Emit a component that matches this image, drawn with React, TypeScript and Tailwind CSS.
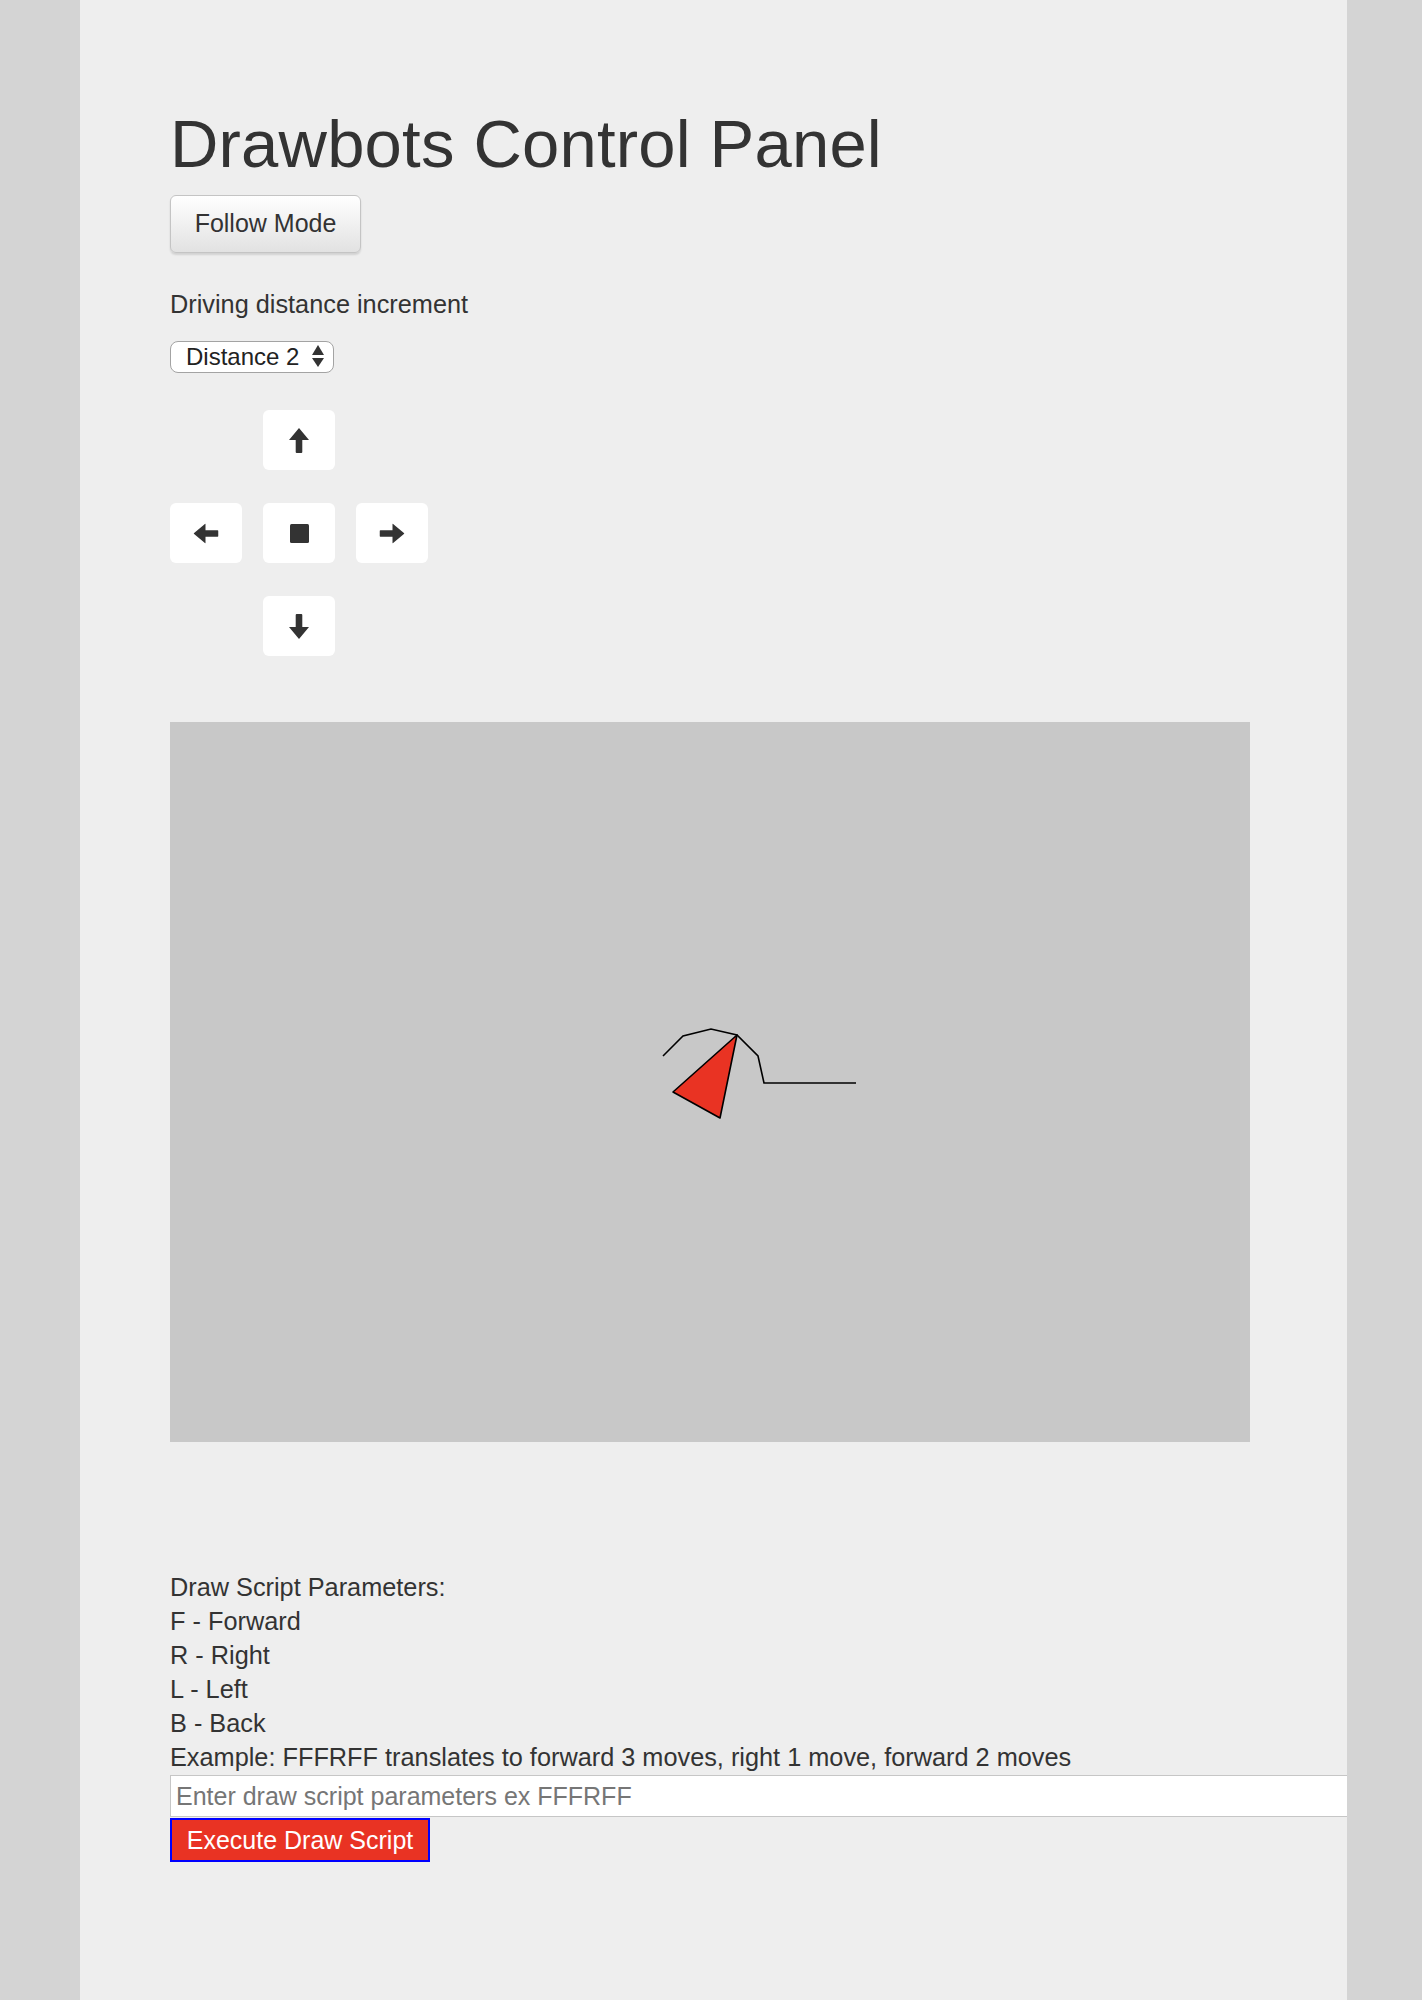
import { useState } from "react"

const ArrowUp = ({ className = "" }: { className?: string }) => (
  <svg width="20" height="25" viewBox="0 0 20 25" className={className}>
    <path d="M10 0 L20 12 H13.3 V24 Q13.3 25 12.3 25 H7.7 Q6.7 25 6.7 24 V12 H0 Z" fill="#333" />
  </svg>
)

const StopSquare = () => (
  <svg width="19" height="19" viewBox="0 0 19 19">
    <rect x="0" y="0" width="19" height="19" rx="1.5" fill="#333" />
  </svg>
)

function PadButton({ children }: { children: React.ReactNode }) {
  return (
    <button className="flex h-[60px] w-[72px] items-center justify-center rounded-[6px] bg-white">
      {children}
    </button>
  )
}

// canvas drawing points, relative to the 1080x720 board
const trail = "493,334 513,314 541,307 567,313 588,334 594,361 686,361"
const bot = "567,313 503,370 550,396"

export default function App() {
  const [distance, setDistance] = useState("2")
  const [script, setScript] = useState("")

  return (
    <div className="min-h-[2000px] bg-[#d4d4d4] font-['Liberation_Sans',Arial,Helvetica,sans-serif] text-[#333]">
      <div className="ml-[80px] min-h-[2000px] w-[1267px] overflow-hidden bg-[#eeeeee] pl-[90px] pt-[107px]">
        <h1 className="text-[67px] leading-[74px] font-normal tracking-[0.2px]">Drawbots Control Panel</h1>

        <button className="mt-[14px] h-[58px] w-[191px] rounded-[6px] border border-[#c4c4c4] bg-gradient-to-b from-white to-[#e2e2e2] text-[25px] shadow-[0_2px_2px_rgba(0,0,0,0.12)]">
          Follow Mode
        </button>

        <p className="mt-[34px] text-[25.3px] leading-[34px]">Driving distance increment</p>

        <div className="relative mt-[20px] w-[164px]">
          <select
            value={distance}
            onChange={(e) => setDistance(e.target.value)}
            className="h-[32px] w-[164px] appearance-none rounded-[8px] border border-[#a3a3a3] bg-white pl-[15px] text-[24px] leading-[30px] text-[#222]"
          >
            <option value="1">Distance 1</option>
            <option value="2">Distance 2</option>
            <option value="3">Distance 3</option>
          </select>
          <svg
            width="12"
            height="22"
            viewBox="0 0 12 22"
            className="pointer-events-none absolute left-[142px] top-[4px]"
          >
            <path d="M6 0 L12 10 H0 Z" fill="#333" />
            <path d="M0 13 H12 L6 22 Z" fill="#333" />
          </svg>
        </div>

        <div className="mt-[37px] grid w-max grid-cols-[72px_72px_72px] gap-x-[21px] gap-y-[33px]">
          <div />
          <PadButton>
            <ArrowUp />
          </PadButton>
          <div />
          <PadButton>
            <ArrowUp className="-rotate-90" />
          </PadButton>
          <PadButton>
            <StopSquare />
          </PadButton>
          <PadButton>
            <ArrowUp className="rotate-90" />
          </PadButton>
          <div />
          <PadButton>
            <ArrowUp className="rotate-180" />
          </PadButton>
          <div />
        </div>

        <div className="mt-[66px] h-[720px] w-[1080px] bg-[#c8c8c8]">
          <svg width="1080" height="720" viewBox="0 0 1080 720">
            <polyline points={trail} fill="none" stroke="#000" strokeWidth="1.6" />
            <polygon points={bot} fill="#e93323" stroke="#000" strokeWidth="1.6" strokeLinejoin="round" />
          </svg>
        </div>

        <div className="mt-[128px] text-[25.3px] leading-[34px]">
          <p>Draw Script Parameters:</p>
          <p>F - Forward</p>
          <p>R - Right</p>
          <p>L - Left</p>
          <p>B - Back</p>
          <p>Example: FFFRFF translates to forward 3 moves, right 1 move, forward 2 moves</p>
        </div>

        <input
          value={script}
          onChange={(e) => setScript(e.target.value)}
          placeholder="Enter draw script parameters ex FFFRFF"
          className="mt-[1px] block h-[42px] w-[1220px] border border-[#c6c6c6] bg-white px-[5px] text-[25px] placeholder:text-[#767676]"
        />

        <button className="mt-[1px] h-[44px] w-[260px] border-2 border-[#0000ff] bg-[#e93323] text-[25px] leading-[38px] text-white">
          Execute Draw Script
        </button>
      </div>
    </div>
  )
}
